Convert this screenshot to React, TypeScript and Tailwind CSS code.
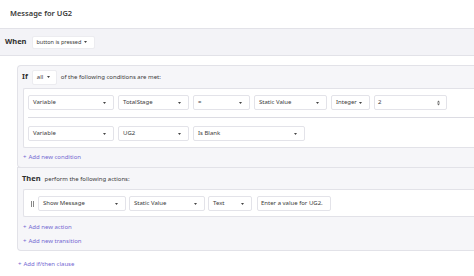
import React from "react";

function Caret() {
  return (
    <svg width="3" height="2" viewBox="0 0 3 2" className="shrink-0">
      <path d="M0 0 L3 0 L1.5 2 Z" fill="#444" />
    </svg>
  );
}

function Spinner() {
  return (
    <svg width="3" height="6" viewBox="0 0 3 6" className="shrink-0">
      <path d="M0 2.5 L3 2.5 L1.5 0.5 Z" fill="#666" />
      <path d="M0 3.5 L3 3.5 L1.5 5.5 Z" fill="#666" />
    </svg>
  );
}

function Grip() {
  return (
    <svg width="3" height="6" viewBox="0 0 3 6" className="shrink-0">
      <rect x="0" y="0" width="1" height="6" fill="#888" />
      <rect x="2" y="0" width="1" height="6" fill="#888" />
    </svg>
  );
}

function Select({ label, className }: { label: string; className: string }) {
  return (
    <div
      className={`h-[15px] bg-white border border-[#e3e3e9] rounded-[2px] flex items-center justify-between pl-[4px] pr-[7px] text-[6px] text-[#3a3a3a] shrink-0 ${className}`}
    >
      <span>{label}</span>
      <Caret />
    </div>
  );
}

function AddLink({ label }: { label: string }) {
  return (
    <div className="flex items-center text-[6px] text-[#7468d2] gap-[2px]">
      <span>+</span>
      <span>{label}</span>
    </div>
  );
}

export default function App() {
  return (
    <div className="w-[474px] h-[276px] bg-white overflow-hidden font-['Noto_Sans',sans-serif] text-[#3a3a3a]">
      <div className="h-[28px] flex items-center pl-[10px] text-[7.5px] font-semibold text-[#3a3a3a]">
        Message for UG2
      </div>

      <div className="h-[28px] flex items-center bg-[#f3f3f7] border-y border-[#e2e2e8] pl-[5px] gap-[6px]">
        <span className="font-bold text-[7.5px] text-[#2e2e2e]">When</span>
        <div className="h-[13px] w-[63px] bg-white border border-[#ececf0] rounded-[2px] flex items-center gap-[3px] pl-[3px] text-[5.5px]">
          <span>button is pressed</span>
          <Caret />
        </div>
      </div>

      <div className="pl-[17px] mt-[9px]">
        <div className="w-[470px] bg-[#f6f6f9] border border-r-0 border-[#e2e2e8] rounded-l-[4px] pl-[4px]">
          <div className="h-[22px] flex items-center gap-[4px]">
            <span className="font-bold text-[7.5px] text-[#2e2e2e]">If</span>
            <div className="h-[15px] w-[25px] bg-white border border-[#ececf0] rounded-[2px] flex items-center justify-between pl-[4px] pr-[6px] text-[6px]">
              <span>all</span>
              <Caret />
            </div>
            <span className="text-[6px]">of the following conditions are met:</span>
          </div>

          <div className="ml-[1px] bg-white border border-r-0 border-[#e2e2e8] rounded-l-[2px] pl-[4px]">
            <div className="flex items-center gap-[4px] pt-[6px] pb-[7px] border-b border-[#dcdce3]">
              <Select label="Variable" className="w-[86px]" />
              <Select label="TotalStage" className="w-[71px]" />
              <Select label="=" className="w-[57px]" />
              <Select label="Static Value" className="w-[73px]" />
              <Select label="Integer" className="w-[39px]" />
              <div className="h-[15px] w-[73px] bg-white border border-[#e3e3e9] rounded-[2px] flex items-center justify-between pl-[3px] pr-[6px] text-[6px]">
                <span>2</span>
                <Spinner />
              </div>
            </div>
            <div className="flex items-center gap-[4px] pt-[8px] pb-[6px]">
              <Select label="Variable" className="w-[86px]" />
              <Select label="UG2" className="w-[71px]" />
              <Select label="Is Blank" className="w-[112px]" />
            </div>
          </div>

          <div className="h-[19px] flex items-center pl-[1px]">
            <AddLink label="Add new condition" />
          </div>
        </div>

        <div className="w-[470px] bg-[#f6f6f9] border-x border-b border-r-0 border-[#e2e2e8] rounded-bl-[4px] pl-[4px] -mt-[1px] border-t">
          <div className="h-[21px] flex items-center gap-[4px] pt-[1px]">
            <span className="font-bold text-[7.5px] text-[#2e2e2e]">Then</span>
            <span className="text-[6px]">perform the following actions:</span>
          </div>

          <div className="ml-[1px] bg-white border border-r-0 border-[#e2e2e8] rounded-l-[2px] pl-[7px] pt-[6px] pb-[5px] flex items-center gap-[3px]">
            <Grip />
            <Select label="Show Message" className="w-[88px] ml-[1px]" />
            <Select label="Static Value" className="w-[76px]" />
            <Select label="Text" className="w-[44px]" />
            <div className="h-[15px] w-[74px] ml-[2px] bg-white border border-[#e3e3e9] rounded-[2px] flex items-center pl-[3px] text-[6px]">
              Enter a value for UG2.
            </div>
          </div>

          <div className="pt-[3px] pb-[2px] pl-[1px]">
            <div className="h-[14px] flex items-center">
              <AddLink label="Add new action" />
            </div>
            <div className="h-[14px] flex items-center">
              <AddLink label="Add new transition" />
            </div>
          </div>
        </div>
      </div>

      <div className="h-[26px] flex items-center pl-[18px]">
        <AddLink label="Add if/then clause" />
      </div>
    </div>
  );
}
